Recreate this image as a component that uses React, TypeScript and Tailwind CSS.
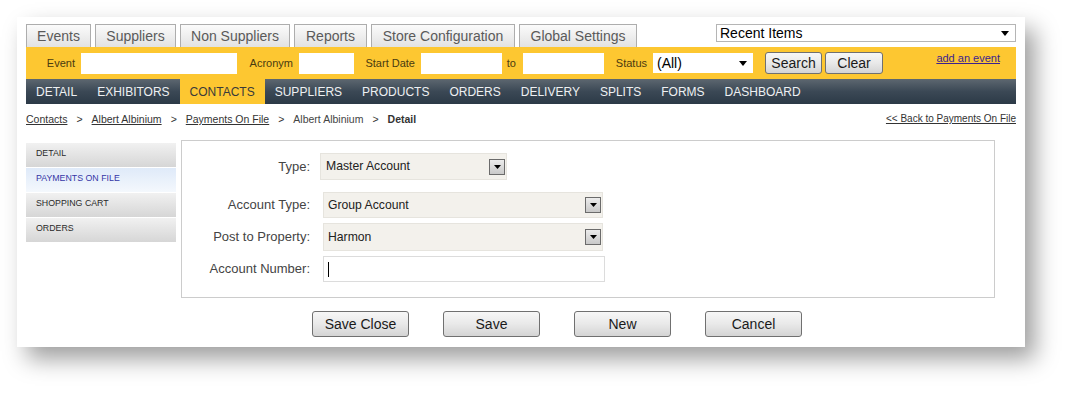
import React from 'react';

const tabs = [
    { label: 'Events', w: 'w-[65px]' },
    { label: 'Suppliers', w: 'w-[81px]' },
    { label: 'Non Suppliers', w: 'w-[110px]' },
    { label: 'Reports', w: 'w-[73px]' },
    { label: 'Store Configuration', w: 'w-[144px]' },
    { label: 'Global Settings', w: 'w-[118px]' },
];

const navItems = ['DETAIL', 'EXHIBITORS', 'CONTACTS', 'SUPPLIERS', 'PRODUCTS', 'ORDERS', 'DELIVERY', 'SPLITS', 'FORMS', 'DASHBOARD'];

const sideItems = ['DETAIL', 'PAYMENTS ON FILE', 'SHOPPING CART', 'ORDERS'];

function Caret({ className = '' }: { className?: string }) {
    return (
        <svg width="8" height="5" viewBox="0 0 8 5" className={className}>
            <polygon points="0,0 8,0 4,5" fill="#000" />
        </svg>
    );
}

function ArrowBox() {
    return (
        <span className="flex h-[16px] w-[16px] items-center justify-center border border-[#6b6b6b] bg-linear-to-b from-[#ececec] to-[#c9c9c9]">
            <svg width="7" height="4" viewBox="0 0 7 4">
                <polygon points="0,0 7,0 3.5,4" fill="#000" />
            </svg>
        </span>
    );
}

function YellowLabel({ text, w }: { text: string; w: string }) {
    return <span className={`${w} shrink-0 pr-[6px] text-right text-[11px] text-[#4a3a10]`}>{text}</span>;
}

function WinButton({ children, className = '' }: { children: React.ReactNode; className?: string }) {
    return (
        <button
            className={`flex items-center justify-center rounded-[3px] border border-[#707070] bg-linear-to-b from-[#f7f7f7] via-[#e9e9e9] to-[#d4d4d4] text-[14px] text-[#1a1a1a] ${className}`}
        >
            {children}
        </button>
    );
}

export default function App() {
    return (
        <div className="min-h-[395px] bg-white pl-[17px] pt-[17px] font-['Liberation_Sans',Arial,sans-serif]">
            <div className="h-[330px] w-[1008px] bg-white px-[9px] pt-[7px] shadow-[10px_12px_22px_rgba(0,0,0,0.38)]">
                {/* Top tabs + recent items */}
                <div className="flex h-[23px] items-start gap-[4px]">
                    {tabs.map((t) => (
                        <div
                            key={t.label}
                            className={`${t.w} flex h-[23px] items-center justify-center border border-b-0 border-[#adadad] bg-linear-to-b from-[#fbfbfb] to-[#e2e2e2] text-[14px] text-[#5a5a5a]`}
                        >
                            {t.label}
                        </div>
                    ))}
                    <div className="ml-auto flex h-[18px] w-[300px] items-center justify-between border border-[#b5b5b5] bg-white pl-[3px] pr-[6px] text-[14px] text-black">
                        <span>Recent Items</span>
                        <Caret />
                    </div>
                </div>

                {/* Yellow search bar */}
                <div className="flex h-[32px] items-center bg-[#fdc731]">
                    <YellowLabel text="Event" w="w-[55px]" />
                    <div className="h-[21px] w-[156px] bg-white" />
                    <YellowLabel text="Acronym" w="w-[62px]" />
                    <div className="h-[21px] w-[55px] bg-white" />
                    <YellowLabel text="Start Date" w="w-[67px]" />
                    <div className="h-[21px] w-[81px] bg-white" />
                    <span className="w-[21px] shrink-0 pr-[7px] text-right text-[11px] text-[#4a3a10]">to</span>
                    <div className="h-[21px] w-[81px] bg-white" />
                    <YellowLabel text="Status" w="w-[49px]" />
                    <div className="flex h-[20px] w-[100px] items-center justify-between bg-white pl-[4px] pr-[6px] text-[14px] text-black">
                        <span>(All)</span>
                        <Caret />
                    </div>
                    <WinButton className="ml-[12px] h-[22px] w-[57px]">Search</WinButton>
                    <WinButton className="ml-[3px] h-[22px] w-[58px]">Clear</WinButton>
                    <a className="ml-auto mr-[16px] self-start pt-[3px] text-[11px] text-[#3b1f8f] underline">add an event</a>
                </div>

                {/* Dark navigation */}
                <div className="flex h-[25px] items-stretch bg-linear-to-b from-[#5d6770] via-[#3b4855] to-[#2c3a47]">
                    {navItems.map((n) => (
                        <div
                            key={n}
                            className={`flex items-center px-[10px] text-[12px] ${
                                n === 'CONTACTS' ? 'bg-[#fdc731] text-[#3a3a3a]' : 'text-[#eef0f2]'
                            }`}
                        >
                            {n}
                        </div>
                    ))}
                </div>

                {/* Breadcrumb */}
                <div className="flex h-[36px] items-start justify-between pt-[9px] text-[10.5px] leading-[12px] text-[#333]">
                    <div className="flex gap-[9px]">
                        <a className="underline">Contacts</a>
                        <span>&gt;</span>
                        <a className="underline">Albert Albinium</a>
                        <span>&gt;</span>
                        <a className="underline">Payments On File</a>
                        <span>&gt;</span>
                        <span className="text-[#444]">Albert Albinium</span>
                        <span>&gt;</span>
                        <span className="font-bold">Detail</span>
                    </div>
                    <a className="text-[10px] underline">&lt;&lt; Back to Payments On File</a>
                </div>

                {/* Main */}
                <div className="flex gap-[5px]">
                    <div className="mt-[3px] flex w-[150px] flex-col gap-[1px]">
                        {sideItems.map((s) => (
                            <div
                                key={s}
                                className={`flex h-[24px] items-center pb-[2px] pl-[10px] text-[8.8px] ${
                                    s === 'PAYMENTS ON FILE'
                                        ? 'bg-linear-to-b from-[#dfeaf9] to-[#f4f8fd] text-[#3535a6]'
                                        : 'bg-linear-to-b from-[#f1f1f1] to-[#d6d6d6] text-[#2a2a2a]'
                                }`}
                            >
                                {s}
                            </div>
                        ))}
                    </div>

                    <div className="h-[158px] w-[814px] border border-[#cccccc] pt-[12px]">
                        <div className="flex items-center">
                            <span className="w-[128px] text-right text-[13px] text-[#444]">Type:</span>
                            <div className="ml-[10px] flex h-[27px] w-[187px] items-center justify-between border border-[#e6e4de] bg-[#f3f1ec] pl-[5px] pr-[1px] text-[12.2px] text-[#222]">
                                <span>Master Account</span>
                                <ArrowBox />
                            </div>
                        </div>
                        <div className="mt-[12px] flex items-center">
                            <span className="w-[128px] text-right text-[13px] text-[#444]">Account Type:</span>
                            <div className="ml-[13px] flex h-[26px] w-[280px] items-center justify-between border border-[#e6e4de] bg-[#f3f1ec] pl-[4px] pr-[1px] text-[12.2px] text-[#222]">
                                <span>Group Account</span>
                                <ArrowBox />
                            </div>
                        </div>
                        <div className="mt-[5px] flex items-center">
                            <span className="w-[128px] text-right text-[13px] text-[#444]">Post to Property:</span>
                            <div className="ml-[13px] flex h-[28px] w-[280px] items-center justify-between border border-[#e6e4de] bg-[#f3f1ec] pl-[4px] pr-[1px] text-[12.2px] text-[#222]">
                                <span>Harmon</span>
                                <ArrowBox />
                            </div>
                        </div>
                        <div className="mt-[5px] flex items-center">
                            <span className="w-[128px] text-right text-[13px] text-[#444]">Account Number:</span>
                            <div className="ml-[13px] flex h-[26px] w-[282px] items-center border border-[#dcdcdc] bg-white pl-[4px]">
                                <span className="h-[15px] w-[1px] bg-black" />
                            </div>
                        </div>
                    </div>
                </div>

                {/* Buttons */}
                <div className="ml-[286px] mt-[13px] flex gap-[34px]">
                    <WinButton className="h-[26px] w-[97px]">Save Close</WinButton>
                    <WinButton className="h-[26px] w-[97px]">Save</WinButton>
                    <WinButton className="h-[26px] w-[97px]">New</WinButton>
                    <WinButton className="h-[26px] w-[97px]">Cancel</WinButton>
                </div>
            </div>
        </div>
    );
}
